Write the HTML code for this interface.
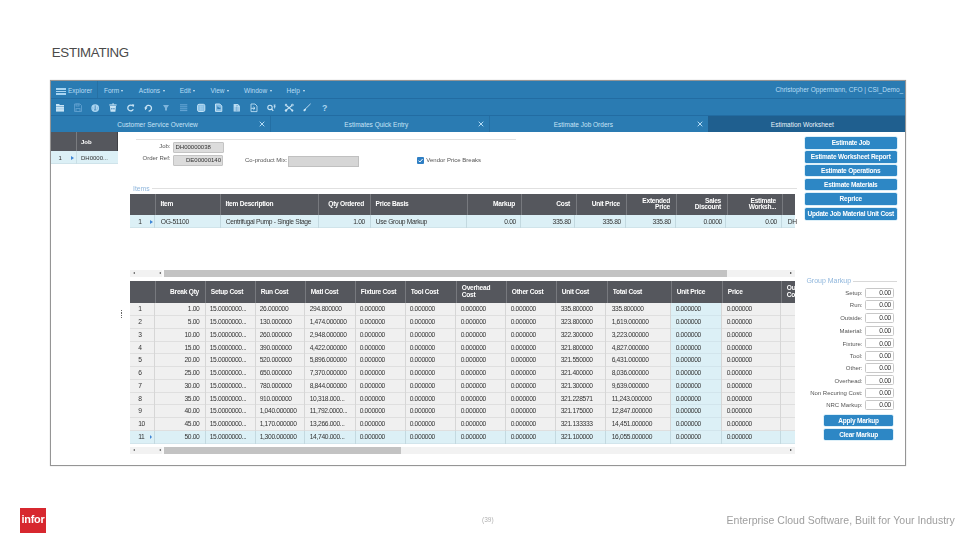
<!DOCTYPE html><html><head><meta charset="utf-8"><style>
html,body{margin:0;padding:0;background:#fff;}
body{width:975px;height:548px;overflow:hidden;position:relative;font-family:"Liberation Sans",sans-serif;}
body div{position:absolute;box-sizing:border-box;}
.t{white-space:nowrap;line-height:1;}
.r{text-align:right;}
.c{text-align:center;}
</style></head><body>
<div class="t" style="left:51.8px;top:46.3px;font-size:13.3px;color:#4a4a4a;letter-spacing:-0.32px;">ESTIMATING</div>
<div style="left:0;top:0;width:975px;height:548px;filter:blur(0.3px);">
<div style="left:50px;top:80px;width:856px;height:386px;border:1px solid #959595;box-shadow:0 0 1px rgba(0,0,0,.25);background:#fff;"></div>
<div style="left:51px;top:81px;width:854px;height:17px;background:#2a7bb2;"></div>
<div style="left:51px;top:98px;width:854px;height:1px;background:#226ca2;"></div>
<div style="left:51px;top:99px;width:854px;height:16px;background:#2a7bb2;"></div>
<div style="left:51px;top:115px;width:854px;height:1px;background:#226ca2;"></div>
<div style="left:51px;top:116px;width:854px;height:16px;background:#2a7bb2;"></div>
<div style="left:97px;top:81px;width:1px;height:17px;background:#2670a3;"></div>
<div style="left:56.3px;top:87.9px;width:9.4px;height:1.7px;background:#a8d5f2;"></div>
<div style="left:56.3px;top:90.65px;width:9.4px;height:1.7px;background:#a8d5f2;"></div>
<div style="left:56.3px;top:93.4px;width:9.4px;height:1.7px;background:#a8d5f2;"></div>
<div class="t" style="left:68px;top:88px;font-size:6.5px;color:#b9ddf5;">Explorer</div>
<div class="t" style="left:104px;top:88px;font-size:6.5px;color:#b9ddf5;">Form</div>
<div style="left:121.2px;top:89.8px;width:0;height:0;border-left:1.6px solid transparent;border-right:1.6px solid transparent;border-top:2.2px solid #d6eaf7;"></div>
<div class="t" style="left:138.8px;top:88px;font-size:6.5px;color:#b9ddf5;">Actions</div>
<div style="left:162.70000000000002px;top:89.8px;width:0;height:0;border-left:1.6px solid transparent;border-right:1.6px solid transparent;border-top:2.2px solid #d6eaf7;"></div>
<div class="t" style="left:179.7px;top:88px;font-size:6.5px;color:#b9ddf5;">Edit</div>
<div style="left:193.4px;top:89.8px;width:0;height:0;border-left:1.6px solid transparent;border-right:1.6px solid transparent;border-top:2.2px solid #d6eaf7;"></div>
<div class="t" style="left:210.5px;top:88px;font-size:6.5px;color:#b9ddf5;">View</div>
<div style="left:227.4px;top:89.8px;width:0;height:0;border-left:1.6px solid transparent;border-right:1.6px solid transparent;border-top:2.2px solid #d6eaf7;"></div>
<div class="t" style="left:244px;top:88px;font-size:6.5px;color:#b9ddf5;">Window</div>
<div style="left:270.09999999999997px;top:89.8px;width:0;height:0;border-left:1.6px solid transparent;border-right:1.6px solid transparent;border-top:2.2px solid #d6eaf7;"></div>
<div class="t" style="left:286.5px;top:88px;font-size:6.5px;color:#b9ddf5;">Help</div>
<div style="left:302.7px;top:89.8px;width:0;height:0;border-left:1.6px solid transparent;border-right:1.6px solid transparent;border-top:2.2px solid #d6eaf7;"></div>
<div class="t" style="left:775.4px;top:87px;font-size:6.5px;color:#b9ddf5;">Christopher Oppermann, CFO | CSI_Demo_</div>
<svg style="position:absolute;left:0;top:0" width="340" height="120" viewBox="0 0 340 120">
<g fill="#c9e4f5">
<path d="M56 104 h3 l1 1 h4 v1.2 h-8 z"/><rect x="56" y="106.6" width="8" height="5"/><rect x="56" y="108.6" width="8" height="0.6" fill="#8ebfe0"/>
</g>
<g fill="none" stroke="#5f9fcf" stroke-width="0.9">
<path d="M74.5 104 h5.5 l1.5 1.5 v6 h-7 z"/><rect x="76" y="104" width="3" height="2"/><rect x="76" y="108.5" width="4" height="3"/>
</g>
<circle cx="95.2" cy="108.1" r="3.9" fill="#aad5f1"/>
<path d="M95.2 105.4 v4.2 M94 109.9 h2.4" stroke="#3a7fb3" stroke-width="0.8"/><path d="M92.6 107 q0.8 1.2 0 2.4 M97.8 107 q-0.8 1.2 0 2.4" stroke="#6aa7d3" stroke-width="0.5" fill="none"/>
<g fill="#c9e4f5">
<rect x="109.3" y="104.4" width="7.3" height="1.1"/><rect x="112.2" y="103.5" width="1.8" height="1"/>
<path d="M109.9 106 h6.1 l-0.6 5.8 h-4.9 z"/>
</g>
<rect x="111.3" y="108" width="1.1" height="1.4" fill="#3f82b6"/><rect x="113.4" y="108" width="1.1" height="1.4" fill="#3f82b6"/>
<path d="M133 106.2 A2.9 2.9 0 1 0 133.3 109.2" fill="none" stroke="#c9e4f5" stroke-width="1.3"/>
<path d="M131.6 104.3 L134.2 104.6 L133.8 107.3 z" fill="#c9e4f5"/>
<path d="M145.9 109.3 A2.9 2.9 0 1 1 148.6 111.1" fill="none" stroke="#c9e4f5" stroke-width="1.3"/>
<path d="M144.5 107.3 L147.5 107.4 L145.2 110.2 z" fill="#c9e4f5"/>
<path d="M163 105 h6 l-2 3 v2.4 h-2 v-2.4 z" fill="#7db4dc"/>
<g fill="#6aa8d6"><rect x="180" y="104.3" width="7.3" height="1"/><rect x="180" y="106.3" width="7.3" height="1"/><rect x="180" y="108.3" width="7.3" height="1"/><rect x="180" y="110.1" width="7.3" height="1"/></g>
<rect x="197.6" y="104.3" width="7.2" height="7.2" rx="1.4" fill="#86bfe6" stroke="#c2e1f4" stroke-width="1"/>
<path d="M199.2 106.6 h4 M199.2 108.2 h4 M199.2 109.8 h4 M200.5 105.5 v5 M202 105.5 v5" stroke="#a9d4f0" stroke-width="0.45"/>
<path d="M215.5 104 h4.3 l2 2 v5.4 h-6.3 z" fill="#7fb9e2" stroke="#c2e1f4" stroke-width="1"/>
<path d="M217.3 106.2 l1.8 1.6 l1.4 -0.3 l0 1.6 l-3.2 0 z" fill="#2f7db4"/>
<path d="M233.6 104 h4.3 l2 2 v5.6 h-6.3 z" fill="#b9dcf2"/>
<path d="M234.5 108 h4.6 M234.5 110 h4.6 M236.7 107 v4.4" stroke="#5f9fcf" stroke-width="0.6"/>
<path d="M236.6 105 l0.8 1 l-0.8 0.6" stroke="#2f7db4" stroke-width="0.6" fill="none"/>
<path d="M251 104 h4 l2 2 v5.6 h-6 z" fill="none" stroke="#b9dcf2" stroke-width="0.9"/>
<path d="M251.3 108.3 h3.5 M253.4 106.8 l1.6 1.5 l-1.6 1.5" stroke="#d5ecf9" stroke-width="0.9" fill="none"/>
<circle cx="270" cy="107.4" r="2.2" fill="none" stroke="#c9e4f5" stroke-width="1.1"/>
<path d="M271.5 109 l1.8 1.9" stroke="#c9e4f5" stroke-width="1.2"/>
<path d="M273.6 105 h2 M273.6 106.7 h2 M274.6 105 v3.5" stroke="#c9e4f5" stroke-width="0.8"/>
<path d="M286 105.3 L292.3 110.4 M292.2 105.3 L285.9 110.4" stroke="#c9e4f5" stroke-width="1.1"/>
<g fill="#c9e4f5"><circle cx="286" cy="105" r="1.2"/><circle cx="292.4" cy="105" r="1.2"/><circle cx="286" cy="110.5" r="1.2"/><circle cx="292.3" cy="110.6" r="1.1"/></g><circle cx="286" cy="105" r="0.5" fill="#2a7bb2"/><circle cx="292.4" cy="105" r="0.5" fill="#2a7bb2"/>
<path d="M310.6 103.8 L305 109.3" stroke="#c9e4f5" stroke-width="0.9"/>
<ellipse cx="304.7" cy="110" rx="1.5" ry="1" transform="rotate(-45 304.7 110)" fill="#c9e6f7"/>
<text x="322" y="111.4" font-family="Liberation Sans" font-weight="bold" font-size="8.8" fill="#a9d5f1">?</text>
</svg>
<div style="left:707.7px;top:116px;width:197.3px;height:16px;background:#1f5f8f;"></div>
<div style="left:269.5px;top:116px;width:1px;height:16px;background:#246fa4;"></div>
<div style="left:489.4px;top:116px;width:1px;height:16px;background:#246fa4;"></div>
<div class="t" style="left:117.2px;top:121.5px;font-size:6.5px;color:#c8e4f6;">Customer Service Overview</div>
<div class="t" style="left:344.3px;top:121.5px;font-size:6.5px;color:#c8e4f6;">Estimates Quick Entry</div>
<div class="t" style="left:553.7px;top:121.5px;font-size:6.5px;color:#c8e4f6;">Estimate Job Orders</div>
<div class="t" style="left:770.8px;top:121.5px;font-size:6.5px;color:#e8f3fa;">Estimation Worksheet</div>
<svg style="position:absolute;left:258.8px;top:120.7px" width="6" height="6" viewBox="0 0 6 6"><path d="M0.7 0.7 L5.3 5.3 M5.3 0.7 L0.7 5.3" stroke="#b5dcf5" stroke-width="1"/></svg>
<svg style="position:absolute;left:477.8px;top:120.7px" width="6" height="6" viewBox="0 0 6 6"><path d="M0.7 0.7 L5.3 5.3 M5.3 0.7 L0.7 5.3" stroke="#b5dcf5" stroke-width="1"/></svg>
<svg style="position:absolute;left:697.4px;top:120.7px" width="6" height="6" viewBox="0 0 6 6"><path d="M0.7 0.7 L5.3 5.3 M5.3 0.7 L0.7 5.3" stroke="#b5dcf5" stroke-width="1"/></svg>
<div style="left:51px;top:132px;width:67px;height:18.5px;background:#55575d;"></div>
<div style="left:76px;top:132px;width:1px;height:18.5px;background:#7a7c80;"></div>
<div style="left:116.5px;top:132px;width:1.5px;height:18.5px;background:#3e4045;"></div>
<div class="t" style="left:81px;top:139px;font-size:6px;font-weight:bold;color:#fff;">Job</div>
<div style="left:51px;top:150.5px;width:67px;height:13px;background:#dcf0f6;border-bottom:1px solid #cfe3ea;"></div>
<div style="left:76px;top:150.5px;width:1px;height:13px;background:#c8dfe6;"></div>
<div class="t" style="left:58.5px;top:154.5px;font-size:6px;color:#333;">1</div>
<div style="left:71.3px;top:156px;width:0;height:0;border-top:2.5px solid transparent;border-bottom:2.5px solid transparent;border-left:3px solid #3f86d6;"></div>
<div class="t" style="left:81px;top:154.5px;font-size:6px;color:#333;">DH0000...</div>
<div style="left:136px;top:139px;width:380px;height:1px;background:#e2e2e2;"></div>
<div class="t r" style="left:120px;top:143.3px;width:50.5px;font-size:6px;color:#555;">Job:</div>
<div style="left:173px;top:142px;width:50.5px;height:10.5px;background:#dcdcdc;border:1px solid #c4c4c4;border-radius:1px;"></div>
<div class="t" style="left:175.5px;top:144px;font-size:6px;color:#333;">DH00000038</div>
<div class="t r" style="left:120px;top:154.8px;width:50.5px;font-size:6px;color:#555;">Order Ref:</div>
<div style="left:172.5px;top:155px;width:50.5px;height:10.5px;background:#dcdcdc;border:1px solid #c4c4c4;border-radius:1px;"></div>
<div class="t r" style="left:172.5px;top:156.8px;width:48.5px;font-size:6px;color:#333;">DE00000140</div>
<div class="t" style="left:245px;top:156.6px;font-size:6px;color:#555;">Co-product Mix:</div>
<div style="left:288px;top:156px;width:71px;height:11px;background:#d6d6d6;border:1px solid #c0c0c0;"></div>
<div style="left:417px;top:157px;width:7px;height:6.5px;background:#2f7fc4;border-radius:1px;"></div>
<svg style="position:absolute;left:417px;top:157px" width="7" height="7" viewBox="0 0 7 7"><path d="M1.5 3.6 L2.9 5 L5.6 2" stroke="#fff" stroke-width="1" fill="none"/></svg>
<div class="t" style="left:426.3px;top:157px;font-size:6px;color:#555;">Vendor Price Breaks</div>
<div class="t" style="left:133px;top:186px;font-size:6.8px;color:#8fb6dc;">Items</div>
<div style="left:152px;top:188px;width:645px;height:1px;background:#e0e0e0;"></div>
<div style="left:130px;top:194px;width:665px;height:21px;background:#55575d;"></div>
<div style="left:130px;top:215px;width:665px;height:13px;background:#dcf0f6;border-bottom:1px solid #d0e4ea;"></div>
<div style="left:155px;top:194px;width:1px;height:21px;background:#77797e;"></div>
<div style="left:220px;top:194px;width:1px;height:21px;background:#77797e;"></div>
<div style="left:318px;top:194px;width:1px;height:21px;background:#77797e;"></div>
<div style="left:370px;top:194px;width:1px;height:21px;background:#77797e;"></div>
<div style="left:467px;top:194px;width:1px;height:21px;background:#77797e;"></div>
<div style="left:521px;top:194px;width:1px;height:21px;background:#77797e;"></div>
<div style="left:576px;top:194px;width:1px;height:21px;background:#77797e;"></div>
<div style="left:626px;top:194px;width:1px;height:21px;background:#77797e;"></div>
<div style="left:676px;top:194px;width:1px;height:21px;background:#77797e;"></div>
<div style="left:727px;top:194px;width:1px;height:21px;background:#77797e;"></div>
<div style="left:782px;top:194px;width:1px;height:21px;background:#77797e;"></div>
<div style="left:154px;top:215px;width:1px;height:13px;background:#c3d9e0;"></div>
<div style="left:220px;top:215px;width:1px;height:13px;background:#c3d9e0;"></div>
<div style="left:318px;top:215px;width:1px;height:13px;background:#c3d9e0;"></div>
<div style="left:370px;top:215px;width:1px;height:13px;background:#c3d9e0;"></div>
<div style="left:466px;top:215px;width:1px;height:13px;background:#c3d9e0;"></div>
<div style="left:520px;top:215px;width:1px;height:13px;background:#c3d9e0;"></div>
<div style="left:574px;top:215px;width:1px;height:13px;background:#c3d9e0;"></div>
<div style="left:625px;top:215px;width:1px;height:13px;background:#c3d9e0;"></div>
<div style="left:675px;top:215px;width:1px;height:13px;background:#c3d9e0;"></div>
<div style="left:725px;top:215px;width:1px;height:13px;background:#c3d9e0;"></div>
<div style="left:781px;top:215px;width:1px;height:13px;background:#c3d9e0;"></div>
<div class="t" style="left:160.6px;top:201px;font-size:6.6px;letter-spacing:-0.25px;font-weight:bold;color:#fff;line-height:6.8px;">Item</div>
<div class="t" style="left:225.6px;top:201px;font-size:6.6px;letter-spacing:-0.25px;font-weight:bold;color:#fff;line-height:6.8px;">Item Description</div>
<div class="t r" style="left:318px;width:46px;top:201px;font-size:6.6px;letter-spacing:-0.25px;font-weight:bold;color:#fff;line-height:6.8px;">Qty Ordered</div>
<div class="t" style="left:375.6px;top:201px;font-size:6.6px;letter-spacing:-0.25px;font-weight:bold;color:#fff;line-height:6.8px;">Price Basis</div>
<div class="t r" style="left:467px;width:48px;top:201px;font-size:6.6px;letter-spacing:-0.25px;font-weight:bold;color:#fff;line-height:6.8px;">Markup</div>
<div class="t r" style="left:521px;width:49px;top:201px;font-size:6.6px;letter-spacing:-0.25px;font-weight:bold;color:#fff;line-height:6.8px;">Cost</div>
<div class="t r" style="left:576px;width:44px;top:201px;font-size:6.6px;letter-spacing:-0.25px;font-weight:bold;color:#fff;line-height:6.8px;">Unit Price</div>
<div class="t r" style="left:626px;width:44px;top:197.7px;font-size:6.6px;letter-spacing:-0.25px;font-weight:bold;color:#fff;line-height:6.8px;">Extended<br>Price</div>
<div class="t r" style="left:676px;width:45px;top:197.7px;font-size:6.6px;letter-spacing:-0.25px;font-weight:bold;color:#fff;line-height:6.8px;">Sales<br>Discount</div>
<div class="t r" style="left:727px;width:49px;top:197.7px;font-size:6.6px;letter-spacing:-0.25px;font-weight:bold;color:#fff;line-height:6.8px;">Estimate<br>Worksh...</div>
<div class="t" style="left:787.6px;top:201px;font-size:6.6px;letter-spacing:-0.25px;font-weight:bold;color:#fff;line-height:6.8px;"></div>
<div class="t" style="left:138.2px;top:218.5px;font-size:6.7px;letter-spacing:-0.33px;color:#333;">1</div>
<div style="left:150.3px;top:220px;width:0;height:0;border-top:2.5px solid transparent;border-bottom:2.5px solid transparent;border-left:3px solid #3f86d6;"></div>
<div class="t" style="left:160.8px;top:218.5px;font-size:6.7px;letter-spacing:-0.33px;color:#333;">OG-51100</div>
<div class="t" style="left:225.8px;top:218.5px;font-size:6.7px;letter-spacing:-0.33px;color:#333;">Centrifugal Pump - Single Stage</div>
<div class="t r" style="left:318px;width:47px;top:218.5px;font-size:6.7px;letter-spacing:-0.33px;color:#333;">1.00</div>
<div class="t" style="left:375.8px;top:218.5px;font-size:6.7px;letter-spacing:-0.33px;color:#333;">Use Group Markup</div>
<div class="t r" style="left:467px;width:49px;top:218.5px;font-size:6.7px;letter-spacing:-0.33px;color:#333;">0.00</div>
<div class="t r" style="left:521px;width:50px;top:218.5px;font-size:6.7px;letter-spacing:-0.33px;color:#333;">335.80</div>
<div class="t r" style="left:576px;width:45px;top:218.5px;font-size:6.7px;letter-spacing:-0.33px;color:#333;">335.80</div>
<div class="t r" style="left:626px;width:45px;top:218.5px;font-size:6.7px;letter-spacing:-0.33px;color:#333;">335.80</div>
<div class="t r" style="left:676px;width:46px;top:218.5px;font-size:6.7px;letter-spacing:-0.33px;color:#333;">0.0000</div>
<div class="t r" style="left:727px;width:50px;top:218.5px;font-size:6.7px;letter-spacing:-0.33px;color:#333;">0.00</div>
<div class="t" style="left:787.8px;top:218.5px;font-size:6.7px;letter-spacing:-0.33px;color:#333;">DH</div>
<div class="t c" style="left:804.5px;top:136.75px;width:92.5px;height:11.849999999999994px;background:#2d87c5;border-radius:1.5px;box-shadow:0 0 0 0.7px #d2ebf8;padding-top:1.4px;line-height:10.449999999999994px;font-size:6.5px;letter-spacing:-0.2px;font-weight:bold;color:#fff;">Estimate Job</div>
<div class="t c" style="left:804.5px;top:151px;width:92.5px;height:11.900000000000006px;background:#2d87c5;border-radius:1.5px;box-shadow:0 0 0 0.7px #d2ebf8;padding-top:1.4px;line-height:10.500000000000005px;font-size:6.5px;letter-spacing:-0.2px;font-weight:bold;color:#fff;">Estimate Worksheet Report</div>
<div class="t c" style="left:804.5px;top:164.7px;width:92.5px;height:11.800000000000011px;background:#2d87c5;border-radius:1.5px;box-shadow:0 0 0 0.7px #d2ebf8;padding-top:1.4px;line-height:10.400000000000011px;font-size:6.5px;letter-spacing:-0.2px;font-weight:bold;color:#fff;">Estimate Operations</div>
<div class="t c" style="left:804.5px;top:178.7px;width:92.5px;height:11.5px;background:#2d87c5;border-radius:1.5px;box-shadow:0 0 0 0.7px #d2ebf8;padding-top:1.4px;line-height:10.1px;font-size:6.5px;letter-spacing:-0.2px;font-weight:bold;color:#fff;">Estimate Materials</div>
<div class="t c" style="left:804.5px;top:193px;width:92.5px;height:11.800000000000011px;background:#2d87c5;border-radius:1.5px;box-shadow:0 0 0 0.7px #d2ebf8;padding-top:1.4px;line-height:10.400000000000011px;font-size:6.5px;letter-spacing:-0.2px;font-weight:bold;color:#fff;">Reprice</div>
<div class="t c" style="left:804.5px;top:208.1px;width:92.5px;height:11.900000000000006px;background:#2d87c5;border-radius:1.5px;box-shadow:0 0 0 0.7px #d2ebf8;padding-top:1.4px;line-height:10.500000000000005px;font-size:6.5px;letter-spacing:-0.2px;font-weight:bold;color:#fff;">Update Job Material Unit Cost</div>
<div style="left:130px;top:269.9px;width:665px;height:7px;background:#f2f2f2;"></div>
<div style="left:163.7px;top:269.9px;width:563.3px;height:7px;background:#c3c3c3;"></div>
<div style="left:132.6px;top:271.9px;width:0;height:0;border-top:1.6px solid transparent;border-bottom:1.6px solid transparent;border-right:2px solid #555;"></div>
<div style="left:158.8px;top:271.9px;width:0;height:0;border-top:1.6px solid transparent;border-bottom:1.6px solid transparent;border-right:2px solid #555;"></div>
<div style="left:162.2px;top:269.9px;width:1.5px;height:7px;background:#fafafa;"></div>
<div style="left:790.2px;top:271.79999999999995px;width:0;height:0;border-top:1.7px solid transparent;border-bottom:1.7px solid transparent;border-left:2.3px solid #333;"></div>
<div style="left:130px;top:446.6px;width:665px;height:7px;background:#f2f2f2;"></div>
<div style="left:163.8px;top:446.6px;width:237.7px;height:7px;background:#c3c3c3;"></div>
<div style="left:132.6px;top:448.6px;width:0;height:0;border-top:1.6px solid transparent;border-bottom:1.6px solid transparent;border-right:2px solid #555;"></div>
<div style="left:158.8px;top:448.6px;width:0;height:0;border-top:1.6px solid transparent;border-bottom:1.6px solid transparent;border-right:2px solid #555;"></div>
<div style="left:162.2px;top:446.6px;width:1.5px;height:7px;background:#fafafa;"></div>
<div style="left:790.2px;top:448.5px;width:0;height:0;border-top:1.7px solid transparent;border-bottom:1.7px solid transparent;border-left:2.3px solid #333;"></div>
<div style="left:130px;top:281px;width:665px;height:22px;background:#55575d;"></div>
<div style="left:155px;top:281px;width:1px;height:22px;background:#77797e;"></div>
<div style="left:205px;top:281px;width:1px;height:22px;background:#77797e;"></div>
<div style="left:255px;top:281px;width:1px;height:22px;background:#77797e;"></div>
<div style="left:305px;top:281px;width:1px;height:22px;background:#77797e;"></div>
<div style="left:355px;top:281px;width:1px;height:22px;background:#77797e;"></div>
<div style="left:405px;top:281px;width:1px;height:22px;background:#77797e;"></div>
<div style="left:456px;top:281px;width:1px;height:22px;background:#77797e;"></div>
<div style="left:506px;top:281px;width:1px;height:22px;background:#77797e;"></div>
<div style="left:556px;top:281px;width:1px;height:22px;background:#77797e;"></div>
<div style="left:607px;top:281px;width:1px;height:22px;background:#77797e;"></div>
<div style="left:671px;top:281px;width:1px;height:22px;background:#77797e;"></div>
<div style="left:722px;top:281px;width:1px;height:22px;background:#77797e;"></div>
<div style="left:781px;top:281px;width:1px;height:22px;background:#77797e;"></div>
<div class="t r" style="left:155px;width:44px;top:288.5px;font-size:6.6px;letter-spacing:-0.25px;font-weight:bold;color:#fff;line-height:6.8px;">Break Qty</div>
<div class="t" style="left:210.8px;top:288.5px;font-size:6.6px;letter-spacing:-0.25px;font-weight:bold;color:#fff;line-height:6.8px;overflow:hidden;width:44.2px;">Setup Cost</div>
<div class="t" style="left:260.8px;top:288.5px;font-size:6.6px;letter-spacing:-0.25px;font-weight:bold;color:#fff;line-height:6.8px;overflow:hidden;width:44.2px;">Run Cost</div>
<div class="t" style="left:310.8px;top:288.5px;font-size:6.6px;letter-spacing:-0.25px;font-weight:bold;color:#fff;line-height:6.8px;overflow:hidden;width:44.2px;">Matl Cost</div>
<div class="t" style="left:360.8px;top:288.5px;font-size:6.6px;letter-spacing:-0.25px;font-weight:bold;color:#fff;line-height:6.8px;overflow:hidden;width:44.2px;">Fixture Cost</div>
<div class="t" style="left:410.8px;top:288.5px;font-size:6.6px;letter-spacing:-0.25px;font-weight:bold;color:#fff;line-height:6.8px;overflow:hidden;width:45.2px;">Tool Cost</div>
<div class="t" style="left:461.8px;top:285px;font-size:6.6px;letter-spacing:-0.25px;font-weight:bold;color:#fff;line-height:6.8px;overflow:hidden;width:44.2px;">Overhead<br>Cost</div>
<div class="t" style="left:511.8px;top:288.5px;font-size:6.6px;letter-spacing:-0.25px;font-weight:bold;color:#fff;line-height:6.8px;overflow:hidden;width:44.2px;">Other Cost</div>
<div class="t" style="left:561.8px;top:288.5px;font-size:6.6px;letter-spacing:-0.25px;font-weight:bold;color:#fff;line-height:6.8px;overflow:hidden;width:45.2px;">Unit Cost</div>
<div class="t" style="left:612.8px;top:288.5px;font-size:6.6px;letter-spacing:-0.25px;font-weight:bold;color:#fff;line-height:6.8px;overflow:hidden;width:58.2px;">Total Cost</div>
<div class="t" style="left:676.8px;top:288.5px;font-size:6.6px;letter-spacing:-0.25px;font-weight:bold;color:#fff;line-height:6.8px;overflow:hidden;width:45.2px;">Unit Price</div>
<div class="t" style="left:727.8px;top:288.5px;font-size:6.6px;letter-spacing:-0.25px;font-weight:bold;color:#fff;line-height:6.8px;overflow:hidden;width:53.2px;">Price</div>
<div class="t" style="left:786.8px;top:285px;font-size:6.6px;letter-spacing:-0.25px;font-weight:bold;color:#fff;line-height:6.8px;overflow:hidden;width:8.2px;">Ou<br>Co</div>
<div style="left:130px;top:303px;width:665px;height:13px;background:#f0f0f0;"></div>
<div style="left:130px;top:315px;width:665px;height:1px;background:#dfdfdf;"></div>
<div style="left:671px;top:303px;width:50px;height:13px;background:#dcf0f6;"></div>
<div style="left:671px;top:315px;width:50px;height:1px;background:#d2e5ec;"></div>
<div style="left:154px;top:303px;width:1px;height:13px;background:#d6d6d6;"></div>
<div style="left:205px;top:303px;width:1px;height:13px;background:#d6d6d6;"></div>
<div style="left:255px;top:303px;width:1px;height:13px;background:#d6d6d6;"></div>
<div style="left:304px;top:303px;width:1px;height:13px;background:#d6d6d6;"></div>
<div style="left:355px;top:303px;width:1px;height:13px;background:#d6d6d6;"></div>
<div style="left:405px;top:303px;width:1px;height:13px;background:#d6d6d6;"></div>
<div style="left:455px;top:303px;width:1px;height:13px;background:#d6d6d6;"></div>
<div style="left:505px;top:303px;width:1px;height:13px;background:#d6d6d6;"></div>
<div style="left:555px;top:303px;width:1px;height:13px;background:#d6d6d6;"></div>
<div style="left:605px;top:303px;width:1px;height:13px;background:#d6d6d6;"></div>
<div style="left:670px;top:303px;width:1px;height:13px;background:#d6d6d6;"></div>
<div style="left:721px;top:303px;width:1px;height:13px;background:#d6d6d6;"></div>
<div style="left:780px;top:303px;width:1px;height:13px;background:#d6d6d6;"></div>
<div class="t" style="left:138.2px;top:306.3px;font-size:6.7px;letter-spacing:-0.33px;color:#333;">1</div>
<div class="t r" style="left:155px;width:44.5px;top:306.3px;font-size:6.7px;letter-spacing:-0.33px;color:#333;">1.00</div>
<div class="t" style="left:209.7px;top:306.3px;font-size:6.7px;letter-spacing:-0.33px;color:#333;">15.0000000...</div>
<div class="t" style="left:259.7px;top:306.3px;font-size:6.7px;letter-spacing:-0.33px;color:#333;">26.000000</div>
<div class="t" style="left:309.7px;top:306.3px;font-size:6.7px;letter-spacing:-0.33px;color:#333;">294.800000</div>
<div class="t" style="left:359.7px;top:306.3px;font-size:6.7px;letter-spacing:-0.33px;color:#333;">0.000000</div>
<div class="t" style="left:409.7px;top:306.3px;font-size:6.7px;letter-spacing:-0.33px;color:#333;">0.000000</div>
<div class="t" style="left:460.7px;top:306.3px;font-size:6.7px;letter-spacing:-0.33px;color:#333;">0.000000</div>
<div class="t" style="left:510.7px;top:306.3px;font-size:6.7px;letter-spacing:-0.33px;color:#333;">0.000000</div>
<div class="t" style="left:560.7px;top:306.3px;font-size:6.7px;letter-spacing:-0.33px;color:#333;">335.800000</div>
<div class="t" style="left:611.7px;top:306.3px;font-size:6.7px;letter-spacing:-0.33px;color:#333;">335.800000</div>
<div class="t" style="left:675.7px;top:306.3px;font-size:6.7px;letter-spacing:-0.33px;color:#333;">0.000000</div>
<div class="t" style="left:726.7px;top:306.3px;font-size:6.7px;letter-spacing:-0.33px;color:#333;">0.000000</div>
<div class="t" style="left:785.7px;top:306.3px;font-size:6.7px;letter-spacing:-0.33px;color:#333;"></div>
<div style="left:130px;top:316px;width:665px;height:13px;background:#f0f0f0;"></div>
<div style="left:130px;top:328px;width:665px;height:1px;background:#dfdfdf;"></div>
<div style="left:671px;top:316px;width:50px;height:13px;background:#dcf0f6;"></div>
<div style="left:671px;top:328px;width:50px;height:1px;background:#d2e5ec;"></div>
<div style="left:154px;top:316px;width:1px;height:13px;background:#d6d6d6;"></div>
<div style="left:205px;top:316px;width:1px;height:13px;background:#d6d6d6;"></div>
<div style="left:255px;top:316px;width:1px;height:13px;background:#d6d6d6;"></div>
<div style="left:304px;top:316px;width:1px;height:13px;background:#d6d6d6;"></div>
<div style="left:355px;top:316px;width:1px;height:13px;background:#d6d6d6;"></div>
<div style="left:405px;top:316px;width:1px;height:13px;background:#d6d6d6;"></div>
<div style="left:455px;top:316px;width:1px;height:13px;background:#d6d6d6;"></div>
<div style="left:505px;top:316px;width:1px;height:13px;background:#d6d6d6;"></div>
<div style="left:555px;top:316px;width:1px;height:13px;background:#d6d6d6;"></div>
<div style="left:605px;top:316px;width:1px;height:13px;background:#d6d6d6;"></div>
<div style="left:670px;top:316px;width:1px;height:13px;background:#d6d6d6;"></div>
<div style="left:721px;top:316px;width:1px;height:13px;background:#d6d6d6;"></div>
<div style="left:780px;top:316px;width:1px;height:13px;background:#d6d6d6;"></div>
<div class="t" style="left:138.2px;top:319.3px;font-size:6.7px;letter-spacing:-0.33px;color:#333;">2</div>
<div class="t r" style="left:155px;width:44.5px;top:319.3px;font-size:6.7px;letter-spacing:-0.33px;color:#333;">5.00</div>
<div class="t" style="left:209.7px;top:319.3px;font-size:6.7px;letter-spacing:-0.33px;color:#333;">15.0000000...</div>
<div class="t" style="left:259.7px;top:319.3px;font-size:6.7px;letter-spacing:-0.33px;color:#333;">130.000000</div>
<div class="t" style="left:309.7px;top:319.3px;font-size:6.7px;letter-spacing:-0.33px;color:#333;">1,474.000000</div>
<div class="t" style="left:359.7px;top:319.3px;font-size:6.7px;letter-spacing:-0.33px;color:#333;">0.000000</div>
<div class="t" style="left:409.7px;top:319.3px;font-size:6.7px;letter-spacing:-0.33px;color:#333;">0.000000</div>
<div class="t" style="left:460.7px;top:319.3px;font-size:6.7px;letter-spacing:-0.33px;color:#333;">0.000000</div>
<div class="t" style="left:510.7px;top:319.3px;font-size:6.7px;letter-spacing:-0.33px;color:#333;">0.000000</div>
<div class="t" style="left:560.7px;top:319.3px;font-size:6.7px;letter-spacing:-0.33px;color:#333;">323.800000</div>
<div class="t" style="left:611.7px;top:319.3px;font-size:6.7px;letter-spacing:-0.33px;color:#333;">1,619.000000</div>
<div class="t" style="left:675.7px;top:319.3px;font-size:6.7px;letter-spacing:-0.33px;color:#333;">0.000000</div>
<div class="t" style="left:726.7px;top:319.3px;font-size:6.7px;letter-spacing:-0.33px;color:#333;">0.000000</div>
<div class="t" style="left:785.7px;top:319.3px;font-size:6.7px;letter-spacing:-0.33px;color:#333;"></div>
<div style="left:130px;top:329px;width:665px;height:13px;background:#f0f0f0;"></div>
<div style="left:130px;top:341px;width:665px;height:1px;background:#dfdfdf;"></div>
<div style="left:671px;top:329px;width:50px;height:13px;background:#dcf0f6;"></div>
<div style="left:671px;top:341px;width:50px;height:1px;background:#d2e5ec;"></div>
<div style="left:154px;top:329px;width:1px;height:13px;background:#d6d6d6;"></div>
<div style="left:205px;top:329px;width:1px;height:13px;background:#d6d6d6;"></div>
<div style="left:255px;top:329px;width:1px;height:13px;background:#d6d6d6;"></div>
<div style="left:304px;top:329px;width:1px;height:13px;background:#d6d6d6;"></div>
<div style="left:355px;top:329px;width:1px;height:13px;background:#d6d6d6;"></div>
<div style="left:405px;top:329px;width:1px;height:13px;background:#d6d6d6;"></div>
<div style="left:455px;top:329px;width:1px;height:13px;background:#d6d6d6;"></div>
<div style="left:505px;top:329px;width:1px;height:13px;background:#d6d6d6;"></div>
<div style="left:555px;top:329px;width:1px;height:13px;background:#d6d6d6;"></div>
<div style="left:605px;top:329px;width:1px;height:13px;background:#d6d6d6;"></div>
<div style="left:670px;top:329px;width:1px;height:13px;background:#d6d6d6;"></div>
<div style="left:721px;top:329px;width:1px;height:13px;background:#d6d6d6;"></div>
<div style="left:780px;top:329px;width:1px;height:13px;background:#d6d6d6;"></div>
<div class="t" style="left:138.2px;top:332.3px;font-size:6.7px;letter-spacing:-0.33px;color:#333;">3</div>
<div class="t r" style="left:155px;width:44.5px;top:332.3px;font-size:6.7px;letter-spacing:-0.33px;color:#333;">10.00</div>
<div class="t" style="left:209.7px;top:332.3px;font-size:6.7px;letter-spacing:-0.33px;color:#333;">15.0000000...</div>
<div class="t" style="left:259.7px;top:332.3px;font-size:6.7px;letter-spacing:-0.33px;color:#333;">260.000000</div>
<div class="t" style="left:309.7px;top:332.3px;font-size:6.7px;letter-spacing:-0.33px;color:#333;">2,948.000000</div>
<div class="t" style="left:359.7px;top:332.3px;font-size:6.7px;letter-spacing:-0.33px;color:#333;">0.000000</div>
<div class="t" style="left:409.7px;top:332.3px;font-size:6.7px;letter-spacing:-0.33px;color:#333;">0.000000</div>
<div class="t" style="left:460.7px;top:332.3px;font-size:6.7px;letter-spacing:-0.33px;color:#333;">0.000000</div>
<div class="t" style="left:510.7px;top:332.3px;font-size:6.7px;letter-spacing:-0.33px;color:#333;">0.000000</div>
<div class="t" style="left:560.7px;top:332.3px;font-size:6.7px;letter-spacing:-0.33px;color:#333;">322.300000</div>
<div class="t" style="left:611.7px;top:332.3px;font-size:6.7px;letter-spacing:-0.33px;color:#333;">3,223.000000</div>
<div class="t" style="left:675.7px;top:332.3px;font-size:6.7px;letter-spacing:-0.33px;color:#333;">0.000000</div>
<div class="t" style="left:726.7px;top:332.3px;font-size:6.7px;letter-spacing:-0.33px;color:#333;">0.000000</div>
<div class="t" style="left:785.7px;top:332.3px;font-size:6.7px;letter-spacing:-0.33px;color:#333;"></div>
<div style="left:130px;top:342px;width:665px;height:12px;background:#f0f0f0;"></div>
<div style="left:130px;top:353px;width:665px;height:1px;background:#dfdfdf;"></div>
<div style="left:671px;top:342px;width:50px;height:12px;background:#dcf0f6;"></div>
<div style="left:671px;top:353px;width:50px;height:1px;background:#d2e5ec;"></div>
<div style="left:154px;top:342px;width:1px;height:12px;background:#d6d6d6;"></div>
<div style="left:205px;top:342px;width:1px;height:12px;background:#d6d6d6;"></div>
<div style="left:255px;top:342px;width:1px;height:12px;background:#d6d6d6;"></div>
<div style="left:304px;top:342px;width:1px;height:12px;background:#d6d6d6;"></div>
<div style="left:355px;top:342px;width:1px;height:12px;background:#d6d6d6;"></div>
<div style="left:405px;top:342px;width:1px;height:12px;background:#d6d6d6;"></div>
<div style="left:455px;top:342px;width:1px;height:12px;background:#d6d6d6;"></div>
<div style="left:505px;top:342px;width:1px;height:12px;background:#d6d6d6;"></div>
<div style="left:555px;top:342px;width:1px;height:12px;background:#d6d6d6;"></div>
<div style="left:605px;top:342px;width:1px;height:12px;background:#d6d6d6;"></div>
<div style="left:670px;top:342px;width:1px;height:12px;background:#d6d6d6;"></div>
<div style="left:721px;top:342px;width:1px;height:12px;background:#d6d6d6;"></div>
<div style="left:780px;top:342px;width:1px;height:12px;background:#d6d6d6;"></div>
<div class="t" style="left:138.2px;top:345.3px;font-size:6.7px;letter-spacing:-0.33px;color:#333;">4</div>
<div class="t r" style="left:155px;width:44.5px;top:345.3px;font-size:6.7px;letter-spacing:-0.33px;color:#333;">15.00</div>
<div class="t" style="left:209.7px;top:345.3px;font-size:6.7px;letter-spacing:-0.33px;color:#333;">15.0000000...</div>
<div class="t" style="left:259.7px;top:345.3px;font-size:6.7px;letter-spacing:-0.33px;color:#333;">390.000000</div>
<div class="t" style="left:309.7px;top:345.3px;font-size:6.7px;letter-spacing:-0.33px;color:#333;">4,422.000000</div>
<div class="t" style="left:359.7px;top:345.3px;font-size:6.7px;letter-spacing:-0.33px;color:#333;">0.000000</div>
<div class="t" style="left:409.7px;top:345.3px;font-size:6.7px;letter-spacing:-0.33px;color:#333;">0.000000</div>
<div class="t" style="left:460.7px;top:345.3px;font-size:6.7px;letter-spacing:-0.33px;color:#333;">0.000000</div>
<div class="t" style="left:510.7px;top:345.3px;font-size:6.7px;letter-spacing:-0.33px;color:#333;">0.000000</div>
<div class="t" style="left:560.7px;top:345.3px;font-size:6.7px;letter-spacing:-0.33px;color:#333;">321.800000</div>
<div class="t" style="left:611.7px;top:345.3px;font-size:6.7px;letter-spacing:-0.33px;color:#333;">4,827.000000</div>
<div class="t" style="left:675.7px;top:345.3px;font-size:6.7px;letter-spacing:-0.33px;color:#333;">0.000000</div>
<div class="t" style="left:726.7px;top:345.3px;font-size:6.7px;letter-spacing:-0.33px;color:#333;">0.000000</div>
<div class="t" style="left:785.7px;top:345.3px;font-size:6.7px;letter-spacing:-0.33px;color:#333;"></div>
<div style="left:130px;top:354px;width:665px;height:13px;background:#f0f0f0;"></div>
<div style="left:130px;top:366px;width:665px;height:1px;background:#dfdfdf;"></div>
<div style="left:671px;top:354px;width:50px;height:13px;background:#dcf0f6;"></div>
<div style="left:671px;top:366px;width:50px;height:1px;background:#d2e5ec;"></div>
<div style="left:154px;top:354px;width:1px;height:13px;background:#d6d6d6;"></div>
<div style="left:205px;top:354px;width:1px;height:13px;background:#d6d6d6;"></div>
<div style="left:255px;top:354px;width:1px;height:13px;background:#d6d6d6;"></div>
<div style="left:304px;top:354px;width:1px;height:13px;background:#d6d6d6;"></div>
<div style="left:355px;top:354px;width:1px;height:13px;background:#d6d6d6;"></div>
<div style="left:405px;top:354px;width:1px;height:13px;background:#d6d6d6;"></div>
<div style="left:455px;top:354px;width:1px;height:13px;background:#d6d6d6;"></div>
<div style="left:505px;top:354px;width:1px;height:13px;background:#d6d6d6;"></div>
<div style="left:555px;top:354px;width:1px;height:13px;background:#d6d6d6;"></div>
<div style="left:605px;top:354px;width:1px;height:13px;background:#d6d6d6;"></div>
<div style="left:670px;top:354px;width:1px;height:13px;background:#d6d6d6;"></div>
<div style="left:721px;top:354px;width:1px;height:13px;background:#d6d6d6;"></div>
<div style="left:780px;top:354px;width:1px;height:13px;background:#d6d6d6;"></div>
<div class="t" style="left:138.2px;top:357.3px;font-size:6.7px;letter-spacing:-0.33px;color:#333;">5</div>
<div class="t r" style="left:155px;width:44.5px;top:357.3px;font-size:6.7px;letter-spacing:-0.33px;color:#333;">20.00</div>
<div class="t" style="left:209.7px;top:357.3px;font-size:6.7px;letter-spacing:-0.33px;color:#333;">15.0000000...</div>
<div class="t" style="left:259.7px;top:357.3px;font-size:6.7px;letter-spacing:-0.33px;color:#333;">520.000000</div>
<div class="t" style="left:309.7px;top:357.3px;font-size:6.7px;letter-spacing:-0.33px;color:#333;">5,896.000000</div>
<div class="t" style="left:359.7px;top:357.3px;font-size:6.7px;letter-spacing:-0.33px;color:#333;">0.000000</div>
<div class="t" style="left:409.7px;top:357.3px;font-size:6.7px;letter-spacing:-0.33px;color:#333;">0.000000</div>
<div class="t" style="left:460.7px;top:357.3px;font-size:6.7px;letter-spacing:-0.33px;color:#333;">0.000000</div>
<div class="t" style="left:510.7px;top:357.3px;font-size:6.7px;letter-spacing:-0.33px;color:#333;">0.000000</div>
<div class="t" style="left:560.7px;top:357.3px;font-size:6.7px;letter-spacing:-0.33px;color:#333;">321.550000</div>
<div class="t" style="left:611.7px;top:357.3px;font-size:6.7px;letter-spacing:-0.33px;color:#333;">6,431.000000</div>
<div class="t" style="left:675.7px;top:357.3px;font-size:6.7px;letter-spacing:-0.33px;color:#333;">0.000000</div>
<div class="t" style="left:726.7px;top:357.3px;font-size:6.7px;letter-spacing:-0.33px;color:#333;">0.000000</div>
<div class="t" style="left:785.7px;top:357.3px;font-size:6.7px;letter-spacing:-0.33px;color:#333;"></div>
<div style="left:130px;top:367px;width:665px;height:13px;background:#f0f0f0;"></div>
<div style="left:130px;top:379px;width:665px;height:1px;background:#dfdfdf;"></div>
<div style="left:671px;top:367px;width:50px;height:13px;background:#dcf0f6;"></div>
<div style="left:671px;top:379px;width:50px;height:1px;background:#d2e5ec;"></div>
<div style="left:154px;top:367px;width:1px;height:13px;background:#d6d6d6;"></div>
<div style="left:205px;top:367px;width:1px;height:13px;background:#d6d6d6;"></div>
<div style="left:255px;top:367px;width:1px;height:13px;background:#d6d6d6;"></div>
<div style="left:304px;top:367px;width:1px;height:13px;background:#d6d6d6;"></div>
<div style="left:355px;top:367px;width:1px;height:13px;background:#d6d6d6;"></div>
<div style="left:405px;top:367px;width:1px;height:13px;background:#d6d6d6;"></div>
<div style="left:455px;top:367px;width:1px;height:13px;background:#d6d6d6;"></div>
<div style="left:505px;top:367px;width:1px;height:13px;background:#d6d6d6;"></div>
<div style="left:555px;top:367px;width:1px;height:13px;background:#d6d6d6;"></div>
<div style="left:605px;top:367px;width:1px;height:13px;background:#d6d6d6;"></div>
<div style="left:670px;top:367px;width:1px;height:13px;background:#d6d6d6;"></div>
<div style="left:721px;top:367px;width:1px;height:13px;background:#d6d6d6;"></div>
<div style="left:780px;top:367px;width:1px;height:13px;background:#d6d6d6;"></div>
<div class="t" style="left:138.2px;top:370.3px;font-size:6.7px;letter-spacing:-0.33px;color:#333;">6</div>
<div class="t r" style="left:155px;width:44.5px;top:370.3px;font-size:6.7px;letter-spacing:-0.33px;color:#333;">25.00</div>
<div class="t" style="left:209.7px;top:370.3px;font-size:6.7px;letter-spacing:-0.33px;color:#333;">15.0000000...</div>
<div class="t" style="left:259.7px;top:370.3px;font-size:6.7px;letter-spacing:-0.33px;color:#333;">650.000000</div>
<div class="t" style="left:309.7px;top:370.3px;font-size:6.7px;letter-spacing:-0.33px;color:#333;">7,370.000000</div>
<div class="t" style="left:359.7px;top:370.3px;font-size:6.7px;letter-spacing:-0.33px;color:#333;">0.000000</div>
<div class="t" style="left:409.7px;top:370.3px;font-size:6.7px;letter-spacing:-0.33px;color:#333;">0.000000</div>
<div class="t" style="left:460.7px;top:370.3px;font-size:6.7px;letter-spacing:-0.33px;color:#333;">0.000000</div>
<div class="t" style="left:510.7px;top:370.3px;font-size:6.7px;letter-spacing:-0.33px;color:#333;">0.000000</div>
<div class="t" style="left:560.7px;top:370.3px;font-size:6.7px;letter-spacing:-0.33px;color:#333;">321.400000</div>
<div class="t" style="left:611.7px;top:370.3px;font-size:6.7px;letter-spacing:-0.33px;color:#333;">8,036.000000</div>
<div class="t" style="left:675.7px;top:370.3px;font-size:6.7px;letter-spacing:-0.33px;color:#333;">0.000000</div>
<div class="t" style="left:726.7px;top:370.3px;font-size:6.7px;letter-spacing:-0.33px;color:#333;">0.000000</div>
<div class="t" style="left:785.7px;top:370.3px;font-size:6.7px;letter-spacing:-0.33px;color:#333;"></div>
<div style="left:130px;top:380px;width:665px;height:13px;background:#f0f0f0;"></div>
<div style="left:130px;top:392px;width:665px;height:1px;background:#dfdfdf;"></div>
<div style="left:671px;top:380px;width:50px;height:13px;background:#dcf0f6;"></div>
<div style="left:671px;top:392px;width:50px;height:1px;background:#d2e5ec;"></div>
<div style="left:154px;top:380px;width:1px;height:13px;background:#d6d6d6;"></div>
<div style="left:205px;top:380px;width:1px;height:13px;background:#d6d6d6;"></div>
<div style="left:255px;top:380px;width:1px;height:13px;background:#d6d6d6;"></div>
<div style="left:304px;top:380px;width:1px;height:13px;background:#d6d6d6;"></div>
<div style="left:355px;top:380px;width:1px;height:13px;background:#d6d6d6;"></div>
<div style="left:405px;top:380px;width:1px;height:13px;background:#d6d6d6;"></div>
<div style="left:455px;top:380px;width:1px;height:13px;background:#d6d6d6;"></div>
<div style="left:505px;top:380px;width:1px;height:13px;background:#d6d6d6;"></div>
<div style="left:555px;top:380px;width:1px;height:13px;background:#d6d6d6;"></div>
<div style="left:605px;top:380px;width:1px;height:13px;background:#d6d6d6;"></div>
<div style="left:670px;top:380px;width:1px;height:13px;background:#d6d6d6;"></div>
<div style="left:721px;top:380px;width:1px;height:13px;background:#d6d6d6;"></div>
<div style="left:780px;top:380px;width:1px;height:13px;background:#d6d6d6;"></div>
<div class="t" style="left:138.2px;top:383.3px;font-size:6.7px;letter-spacing:-0.33px;color:#333;">7</div>
<div class="t r" style="left:155px;width:44.5px;top:383.3px;font-size:6.7px;letter-spacing:-0.33px;color:#333;">30.00</div>
<div class="t" style="left:209.7px;top:383.3px;font-size:6.7px;letter-spacing:-0.33px;color:#333;">15.0000000...</div>
<div class="t" style="left:259.7px;top:383.3px;font-size:6.7px;letter-spacing:-0.33px;color:#333;">780.000000</div>
<div class="t" style="left:309.7px;top:383.3px;font-size:6.7px;letter-spacing:-0.33px;color:#333;">8,844.000000</div>
<div class="t" style="left:359.7px;top:383.3px;font-size:6.7px;letter-spacing:-0.33px;color:#333;">0.000000</div>
<div class="t" style="left:409.7px;top:383.3px;font-size:6.7px;letter-spacing:-0.33px;color:#333;">0.000000</div>
<div class="t" style="left:460.7px;top:383.3px;font-size:6.7px;letter-spacing:-0.33px;color:#333;">0.000000</div>
<div class="t" style="left:510.7px;top:383.3px;font-size:6.7px;letter-spacing:-0.33px;color:#333;">0.000000</div>
<div class="t" style="left:560.7px;top:383.3px;font-size:6.7px;letter-spacing:-0.33px;color:#333;">321.300000</div>
<div class="t" style="left:611.7px;top:383.3px;font-size:6.7px;letter-spacing:-0.33px;color:#333;">9,639.000000</div>
<div class="t" style="left:675.7px;top:383.3px;font-size:6.7px;letter-spacing:-0.33px;color:#333;">0.000000</div>
<div class="t" style="left:726.7px;top:383.3px;font-size:6.7px;letter-spacing:-0.33px;color:#333;">0.000000</div>
<div class="t" style="left:785.7px;top:383.3px;font-size:6.7px;letter-spacing:-0.33px;color:#333;"></div>
<div style="left:130px;top:393px;width:665px;height:12px;background:#f0f0f0;"></div>
<div style="left:130px;top:404px;width:665px;height:1px;background:#dfdfdf;"></div>
<div style="left:671px;top:393px;width:50px;height:12px;background:#dcf0f6;"></div>
<div style="left:671px;top:404px;width:50px;height:1px;background:#d2e5ec;"></div>
<div style="left:154px;top:393px;width:1px;height:12px;background:#d6d6d6;"></div>
<div style="left:205px;top:393px;width:1px;height:12px;background:#d6d6d6;"></div>
<div style="left:255px;top:393px;width:1px;height:12px;background:#d6d6d6;"></div>
<div style="left:304px;top:393px;width:1px;height:12px;background:#d6d6d6;"></div>
<div style="left:355px;top:393px;width:1px;height:12px;background:#d6d6d6;"></div>
<div style="left:405px;top:393px;width:1px;height:12px;background:#d6d6d6;"></div>
<div style="left:455px;top:393px;width:1px;height:12px;background:#d6d6d6;"></div>
<div style="left:505px;top:393px;width:1px;height:12px;background:#d6d6d6;"></div>
<div style="left:555px;top:393px;width:1px;height:12px;background:#d6d6d6;"></div>
<div style="left:605px;top:393px;width:1px;height:12px;background:#d6d6d6;"></div>
<div style="left:670px;top:393px;width:1px;height:12px;background:#d6d6d6;"></div>
<div style="left:721px;top:393px;width:1px;height:12px;background:#d6d6d6;"></div>
<div style="left:780px;top:393px;width:1px;height:12px;background:#d6d6d6;"></div>
<div class="t" style="left:138.2px;top:396.3px;font-size:6.7px;letter-spacing:-0.33px;color:#333;">8</div>
<div class="t r" style="left:155px;width:44.5px;top:396.3px;font-size:6.7px;letter-spacing:-0.33px;color:#333;">35.00</div>
<div class="t" style="left:209.7px;top:396.3px;font-size:6.7px;letter-spacing:-0.33px;color:#333;">15.0000000...</div>
<div class="t" style="left:259.7px;top:396.3px;font-size:6.7px;letter-spacing:-0.33px;color:#333;">910.000000</div>
<div class="t" style="left:309.7px;top:396.3px;font-size:6.7px;letter-spacing:-0.33px;color:#333;">10,318.000...</div>
<div class="t" style="left:359.7px;top:396.3px;font-size:6.7px;letter-spacing:-0.33px;color:#333;">0.000000</div>
<div class="t" style="left:409.7px;top:396.3px;font-size:6.7px;letter-spacing:-0.33px;color:#333;">0.000000</div>
<div class="t" style="left:460.7px;top:396.3px;font-size:6.7px;letter-spacing:-0.33px;color:#333;">0.000000</div>
<div class="t" style="left:510.7px;top:396.3px;font-size:6.7px;letter-spacing:-0.33px;color:#333;">0.000000</div>
<div class="t" style="left:560.7px;top:396.3px;font-size:6.7px;letter-spacing:-0.33px;color:#333;">321.228571</div>
<div class="t" style="left:611.7px;top:396.3px;font-size:6.7px;letter-spacing:-0.33px;color:#333;">11,243.000000</div>
<div class="t" style="left:675.7px;top:396.3px;font-size:6.7px;letter-spacing:-0.33px;color:#333;">0.000000</div>
<div class="t" style="left:726.7px;top:396.3px;font-size:6.7px;letter-spacing:-0.33px;color:#333;">0.000000</div>
<div class="t" style="left:785.7px;top:396.3px;font-size:6.7px;letter-spacing:-0.33px;color:#333;"></div>
<div style="left:130px;top:405px;width:665px;height:13px;background:#f0f0f0;"></div>
<div style="left:130px;top:417px;width:665px;height:1px;background:#dfdfdf;"></div>
<div style="left:671px;top:405px;width:50px;height:13px;background:#dcf0f6;"></div>
<div style="left:671px;top:417px;width:50px;height:1px;background:#d2e5ec;"></div>
<div style="left:154px;top:405px;width:1px;height:13px;background:#d6d6d6;"></div>
<div style="left:205px;top:405px;width:1px;height:13px;background:#d6d6d6;"></div>
<div style="left:255px;top:405px;width:1px;height:13px;background:#d6d6d6;"></div>
<div style="left:304px;top:405px;width:1px;height:13px;background:#d6d6d6;"></div>
<div style="left:355px;top:405px;width:1px;height:13px;background:#d6d6d6;"></div>
<div style="left:405px;top:405px;width:1px;height:13px;background:#d6d6d6;"></div>
<div style="left:455px;top:405px;width:1px;height:13px;background:#d6d6d6;"></div>
<div style="left:505px;top:405px;width:1px;height:13px;background:#d6d6d6;"></div>
<div style="left:555px;top:405px;width:1px;height:13px;background:#d6d6d6;"></div>
<div style="left:605px;top:405px;width:1px;height:13px;background:#d6d6d6;"></div>
<div style="left:670px;top:405px;width:1px;height:13px;background:#d6d6d6;"></div>
<div style="left:721px;top:405px;width:1px;height:13px;background:#d6d6d6;"></div>
<div style="left:780px;top:405px;width:1px;height:13px;background:#d6d6d6;"></div>
<div class="t" style="left:138.2px;top:408.3px;font-size:6.7px;letter-spacing:-0.33px;color:#333;">9</div>
<div class="t r" style="left:155px;width:44.5px;top:408.3px;font-size:6.7px;letter-spacing:-0.33px;color:#333;">40.00</div>
<div class="t" style="left:209.7px;top:408.3px;font-size:6.7px;letter-spacing:-0.33px;color:#333;">15.0000000...</div>
<div class="t" style="left:259.7px;top:408.3px;font-size:6.7px;letter-spacing:-0.33px;color:#333;">1,040.000000</div>
<div class="t" style="left:309.7px;top:408.3px;font-size:6.7px;letter-spacing:-0.33px;color:#333;">11,792.0000...</div>
<div class="t" style="left:359.7px;top:408.3px;font-size:6.7px;letter-spacing:-0.33px;color:#333;">0.000000</div>
<div class="t" style="left:409.7px;top:408.3px;font-size:6.7px;letter-spacing:-0.33px;color:#333;">0.000000</div>
<div class="t" style="left:460.7px;top:408.3px;font-size:6.7px;letter-spacing:-0.33px;color:#333;">0.000000</div>
<div class="t" style="left:510.7px;top:408.3px;font-size:6.7px;letter-spacing:-0.33px;color:#333;">0.000000</div>
<div class="t" style="left:560.7px;top:408.3px;font-size:6.7px;letter-spacing:-0.33px;color:#333;">321.175000</div>
<div class="t" style="left:611.7px;top:408.3px;font-size:6.7px;letter-spacing:-0.33px;color:#333;">12,847.000000</div>
<div class="t" style="left:675.7px;top:408.3px;font-size:6.7px;letter-spacing:-0.33px;color:#333;">0.000000</div>
<div class="t" style="left:726.7px;top:408.3px;font-size:6.7px;letter-spacing:-0.33px;color:#333;">0.000000</div>
<div class="t" style="left:785.7px;top:408.3px;font-size:6.7px;letter-spacing:-0.33px;color:#333;"></div>
<div style="left:130px;top:418px;width:665px;height:13px;background:#f0f0f0;"></div>
<div style="left:130px;top:430px;width:665px;height:1px;background:#dfdfdf;"></div>
<div style="left:671px;top:418px;width:50px;height:13px;background:#dcf0f6;"></div>
<div style="left:671px;top:430px;width:50px;height:1px;background:#d2e5ec;"></div>
<div style="left:154px;top:418px;width:1px;height:13px;background:#d6d6d6;"></div>
<div style="left:205px;top:418px;width:1px;height:13px;background:#d6d6d6;"></div>
<div style="left:255px;top:418px;width:1px;height:13px;background:#d6d6d6;"></div>
<div style="left:304px;top:418px;width:1px;height:13px;background:#d6d6d6;"></div>
<div style="left:355px;top:418px;width:1px;height:13px;background:#d6d6d6;"></div>
<div style="left:405px;top:418px;width:1px;height:13px;background:#d6d6d6;"></div>
<div style="left:455px;top:418px;width:1px;height:13px;background:#d6d6d6;"></div>
<div style="left:505px;top:418px;width:1px;height:13px;background:#d6d6d6;"></div>
<div style="left:555px;top:418px;width:1px;height:13px;background:#d6d6d6;"></div>
<div style="left:605px;top:418px;width:1px;height:13px;background:#d6d6d6;"></div>
<div style="left:670px;top:418px;width:1px;height:13px;background:#d6d6d6;"></div>
<div style="left:721px;top:418px;width:1px;height:13px;background:#d6d6d6;"></div>
<div style="left:780px;top:418px;width:1px;height:13px;background:#d6d6d6;"></div>
<div class="t" style="left:138.2px;top:421.3px;font-size:6.7px;letter-spacing:-0.33px;color:#333;">10</div>
<div class="t r" style="left:155px;width:44.5px;top:421.3px;font-size:6.7px;letter-spacing:-0.33px;color:#333;">45.00</div>
<div class="t" style="left:209.7px;top:421.3px;font-size:6.7px;letter-spacing:-0.33px;color:#333;">15.0000000...</div>
<div class="t" style="left:259.7px;top:421.3px;font-size:6.7px;letter-spacing:-0.33px;color:#333;">1,170.000000</div>
<div class="t" style="left:309.7px;top:421.3px;font-size:6.7px;letter-spacing:-0.33px;color:#333;">13,266.000...</div>
<div class="t" style="left:359.7px;top:421.3px;font-size:6.7px;letter-spacing:-0.33px;color:#333;">0.000000</div>
<div class="t" style="left:409.7px;top:421.3px;font-size:6.7px;letter-spacing:-0.33px;color:#333;">0.000000</div>
<div class="t" style="left:460.7px;top:421.3px;font-size:6.7px;letter-spacing:-0.33px;color:#333;">0.000000</div>
<div class="t" style="left:510.7px;top:421.3px;font-size:6.7px;letter-spacing:-0.33px;color:#333;">0.000000</div>
<div class="t" style="left:560.7px;top:421.3px;font-size:6.7px;letter-spacing:-0.33px;color:#333;">321.133333</div>
<div class="t" style="left:611.7px;top:421.3px;font-size:6.7px;letter-spacing:-0.33px;color:#333;">14,451.000000</div>
<div class="t" style="left:675.7px;top:421.3px;font-size:6.7px;letter-spacing:-0.33px;color:#333;">0.000000</div>
<div class="t" style="left:726.7px;top:421.3px;font-size:6.7px;letter-spacing:-0.33px;color:#333;">0.000000</div>
<div class="t" style="left:785.7px;top:421.3px;font-size:6.7px;letter-spacing:-0.33px;color:#333;"></div>
<div style="left:130px;top:431px;width:665px;height:13px;background:#dcf0f6;"></div>
<div style="left:130px;top:443px;width:665px;height:1px;background:#d2e5ec;"></div>
<div style="left:154px;top:431px;width:1px;height:13px;background:#c3d9e0;"></div>
<div style="left:205px;top:431px;width:1px;height:13px;background:#c3d9e0;"></div>
<div style="left:255px;top:431px;width:1px;height:13px;background:#c3d9e0;"></div>
<div style="left:304px;top:431px;width:1px;height:13px;background:#c3d9e0;"></div>
<div style="left:355px;top:431px;width:1px;height:13px;background:#c3d9e0;"></div>
<div style="left:405px;top:431px;width:1px;height:13px;background:#c3d9e0;"></div>
<div style="left:455px;top:431px;width:1px;height:13px;background:#c3d9e0;"></div>
<div style="left:505px;top:431px;width:1px;height:13px;background:#c3d9e0;"></div>
<div style="left:555px;top:431px;width:1px;height:13px;background:#c3d9e0;"></div>
<div style="left:605px;top:431px;width:1px;height:13px;background:#c3d9e0;"></div>
<div style="left:670px;top:431px;width:1px;height:13px;background:#c3d9e0;"></div>
<div style="left:721px;top:431px;width:1px;height:13px;background:#c3d9e0;"></div>
<div style="left:780px;top:431px;width:1px;height:13px;background:#c3d9e0;"></div>
<div class="t" style="left:138.2px;top:434.3px;font-size:6.7px;letter-spacing:-0.33px;color:#333;">11</div>
<div style="left:150px;top:435.2px;width:0;height:0;border-top:2.3px solid transparent;border-bottom:2.3px solid transparent;border-left:2.6px solid #3f86d6;"></div>
<div class="t r" style="left:155px;width:44.5px;top:434.3px;font-size:6.7px;letter-spacing:-0.33px;color:#333;">50.00</div>
<div class="t" style="left:209.7px;top:434.3px;font-size:6.7px;letter-spacing:-0.33px;color:#333;">15.0000000...</div>
<div class="t" style="left:259.7px;top:434.3px;font-size:6.7px;letter-spacing:-0.33px;color:#333;">1,300.000000</div>
<div class="t" style="left:309.7px;top:434.3px;font-size:6.7px;letter-spacing:-0.33px;color:#333;">14,740.000...</div>
<div class="t" style="left:359.7px;top:434.3px;font-size:6.7px;letter-spacing:-0.33px;color:#333;">0.000000</div>
<div class="t" style="left:409.7px;top:434.3px;font-size:6.7px;letter-spacing:-0.33px;color:#333;">0.000000</div>
<div class="t" style="left:460.7px;top:434.3px;font-size:6.7px;letter-spacing:-0.33px;color:#333;">0.000000</div>
<div class="t" style="left:510.7px;top:434.3px;font-size:6.7px;letter-spacing:-0.33px;color:#333;">0.000000</div>
<div class="t" style="left:560.7px;top:434.3px;font-size:6.7px;letter-spacing:-0.33px;color:#333;">321.100000</div>
<div class="t" style="left:611.7px;top:434.3px;font-size:6.7px;letter-spacing:-0.33px;color:#333;">16,055.000000</div>
<div class="t" style="left:675.7px;top:434.3px;font-size:6.7px;letter-spacing:-0.33px;color:#333;">0.000000</div>
<div class="t" style="left:726.7px;top:434.3px;font-size:6.7px;letter-spacing:-0.33px;color:#333;">0.000000</div>
<div class="t" style="left:785.7px;top:434.3px;font-size:6.7px;letter-spacing:-0.33px;color:#333;"></div>
<div style="left:121px;top:310.0px;width:1.3px;height:1.3px;background:#666;"></div>
<div style="left:121px;top:312.4px;width:1.3px;height:1.3px;background:#666;"></div>
<div style="left:121px;top:314.8px;width:1.3px;height:1.3px;background:#666;"></div>
<div style="left:121px;top:317.2px;width:1.3px;height:1.3px;background:#666;"></div>
<div class="t" style="left:806.4px;top:277px;font-size:7px;color:#8fb6dc;">Group Markup</div>
<div style="left:853.4px;top:281px;width:43.6px;height:1px;background:#d8d8d8;"></div>
<div class="t r" style="left:780px;width:82.5px;top:290.3px;font-size:6px;color:#555;">Setup:</div>
<div style="left:865px;top:288px;width:28.5px;height:10px;background:#fff;border:1px solid #c8c8c8;border-radius:1.5px;"></div>
<div class="t r" style="left:865px;width:26px;top:290.3px;font-size:6.7px;letter-spacing:-0.33px;color:#333;">0.00</div>
<div class="t r" style="left:780px;width:82.5px;top:302.40000000000003px;font-size:6px;color:#555;">Run:</div>
<div style="left:865px;top:300.1px;width:28.5px;height:10px;background:#fff;border:1px solid #c8c8c8;border-radius:1.5px;"></div>
<div class="t r" style="left:865px;width:26px;top:302.40000000000003px;font-size:6.7px;letter-spacing:-0.33px;color:#333;">0.00</div>
<div class="t r" style="left:780px;width:82.5px;top:315.2px;font-size:6px;color:#555;">Outside:</div>
<div style="left:865px;top:312.9px;width:28.5px;height:10px;background:#fff;border:1px solid #c8c8c8;border-radius:1.5px;"></div>
<div class="t r" style="left:865px;width:26px;top:315.2px;font-size:6.7px;letter-spacing:-0.33px;color:#333;">0.00</div>
<div class="t r" style="left:780px;width:82.5px;top:327.90000000000003px;font-size:6px;color:#555;">Material:</div>
<div style="left:865px;top:325.6px;width:28.5px;height:10px;background:#fff;border:1px solid #c8c8c8;border-radius:1.5px;"></div>
<div class="t r" style="left:865px;width:26px;top:327.90000000000003px;font-size:6.7px;letter-spacing:-0.33px;color:#333;">0.00</div>
<div class="t r" style="left:780px;width:82.5px;top:340.5px;font-size:6px;color:#555;">Fixture:</div>
<div style="left:865px;top:338.2px;width:28.5px;height:10px;background:#fff;border:1px solid #c8c8c8;border-radius:1.5px;"></div>
<div class="t r" style="left:865px;width:26px;top:340.5px;font-size:6.7px;letter-spacing:-0.33px;color:#333;">0.00</div>
<div class="t r" style="left:780px;width:82.5px;top:353.0px;font-size:6px;color:#555;">Tool:</div>
<div style="left:865px;top:350.7px;width:28.5px;height:10px;background:#fff;border:1px solid #c8c8c8;border-radius:1.5px;"></div>
<div class="t r" style="left:865px;width:26px;top:353.0px;font-size:6.7px;letter-spacing:-0.33px;color:#333;">0.00</div>
<div class="t r" style="left:780px;width:82.5px;top:365.3px;font-size:6px;color:#555;">Other:</div>
<div style="left:865px;top:363px;width:28.5px;height:10px;background:#fff;border:1px solid #c8c8c8;border-radius:1.5px;"></div>
<div class="t r" style="left:865px;width:26px;top:365.3px;font-size:6.7px;letter-spacing:-0.33px;color:#333;">0.00</div>
<div class="t r" style="left:780px;width:82.5px;top:377.7px;font-size:6px;color:#555;">Overhead:</div>
<div style="left:865px;top:375.4px;width:28.5px;height:10px;background:#fff;border:1px solid #c8c8c8;border-radius:1.5px;"></div>
<div class="t r" style="left:865px;width:26px;top:377.7px;font-size:6.7px;letter-spacing:-0.33px;color:#333;">0.00</div>
<div class="t r" style="left:780px;width:82.5px;top:390.0px;font-size:6px;color:#555;">Non Recuring Cost:</div>
<div style="left:865px;top:387.7px;width:28.5px;height:10px;background:#fff;border:1px solid #c8c8c8;border-radius:1.5px;"></div>
<div class="t r" style="left:865px;width:26px;top:390.0px;font-size:6.7px;letter-spacing:-0.33px;color:#333;">0.00</div>
<div class="t r" style="left:780px;width:82.5px;top:402.3px;font-size:6px;color:#555;">NRC Markup:</div>
<div style="left:865px;top:400px;width:28.5px;height:10px;background:#fff;border:1px solid #c8c8c8;border-radius:1.5px;"></div>
<div class="t r" style="left:865px;width:26px;top:402.3px;font-size:6.7px;letter-spacing:-0.33px;color:#333;">0.00</div>
<div class="t c" style="left:823.9px;top:415.1px;width:69.4px;height:11.199999999999989px;background:#2d87c5;border-radius:1.5px;box-shadow:0 0 0 0.7px #d2ebf8;padding-top:0.6px;line-height:10.599999999999989px;font-size:6.5px;letter-spacing:-0.2px;font-weight:bold;color:#fff;">Apply Markup</div>
<div class="t c" style="left:823.9px;top:429px;width:69.4px;height:11.399999999999977px;background:#2d87c5;border-radius:1.5px;box-shadow:0 0 0 0.7px #d2ebf8;padding-top:0.6px;line-height:10.799999999999978px;font-size:6.5px;letter-spacing:-0.2px;font-weight:bold;color:#fff;">Clear Markup</div>
</div>
<div style="left:20px;top:508px;width:26px;height:25px;background:#d7282f;"></div>
<div class="t" style="left:21.5px;top:514.4px;font-size:10.9px;font-weight:bold;color:#fff;letter-spacing:-0.25px;">infor</div>
<div class="t" style="left:482px;top:516.5px;font-size:6.5px;color:#b0b0b0;">(39)</div>
<div class="t" style="left:726.6px;top:515.2px;font-size:10.5px;color:#9e9e9e;">Enterprise Cloud Software, Built for Your Industry</div>
</body></html>
